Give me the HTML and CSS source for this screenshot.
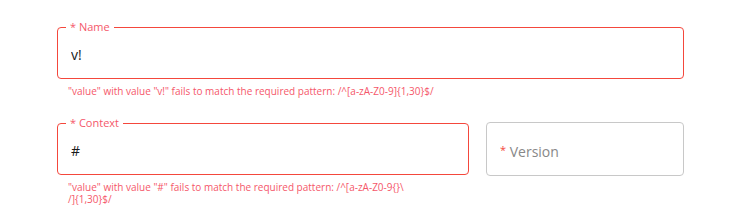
FILE: index.html
```html
<!DOCTYPE html>
<html>
  <head>
    <meta charset='UTF-8'>
    <title>Stack form</title>
    <link rel="stylesheet" href="styles.css">
  </head>
  <body>
    <form class="stack-form">
      <div class="field-group">
        <fieldset class="field invalid">
          <legend><span class="req">*</span> Name</legend>
          <input type="text" value="v!">
        </fieldset>
        <p class="error">"value" with value "v!" fails to match the required pattern: /^[a-zA-Z0-9]{1,30}$/</p>
      </div>
      <div class="row">
        <div class="field-group">
          <fieldset class="field invalid">
            <legend><span class="req">*</span> Context</legend>
            <input type="text" value="#">
          </fieldset>
          <p class="error">"value" with value "#" fails to match the required pattern: /^[a-zA-Z0-9{}\/]{1,30}$/</p>
        </div>
        <div class="field-group">
          <div class="field plain">
            <span class="placeholder"><span class="req">*</span> Version</span>
          </div>
        </div>
      </div>
    </form>
  </body>
</html>
```

FILE: styles.css
```css
html {
  background: white;
}
body {
  margin: 0;
  font-family: 'Open Sans', sans-serif;
}
.stack-form {
  width: 627px;
  padding: 21px 0 0 57px;
}
.row {
  display: grid;
  grid-template-columns: 412px 198px;
  column-gap: 17px;
  margin-top: 20px;
}
.field {
  margin: 0;
  padding: 0;
  border: 1px solid #c8c8c8;
  border-radius: 4px;
  min-width: 0;
}
.field.invalid {
  border-color: #f4473c;
}
legend {
  margin-left: 8px;
  padding: 0 4px;
  font-size: 11px;
  line-height: 12px;
  color: #f5576a;
}
.field input {
  display: block;
  width: 100%;
  height: 42px;
  margin: 0 0 3px;
  padding: 0 0 0 13px;
  border: 0;
  outline: none;
  background: transparent;
  font-family: 'Open Sans', sans-serif;
  font-size: 14px;
  color: #1a1a1a;
}
.field.plain {
  display: flex;
  align-items: center;
  box-sizing: border-box;
  height: 54px;
  margin-top: 5px;
  padding: 5px 13px 0;
}
.placeholder {
  font-size: 14px;
  color: #888;
}
.placeholder .req {
  color: #f4473c;
  font-size: 11px;
  vertical-align: 3px;
}
.error {
  margin: 6px 0 0 11px;
  font-size: 10px;
  line-height: 12px;
  color: #f5576a;
  line-break: anywhere;
}
.row .error {
  max-width: 338px;
}
```
